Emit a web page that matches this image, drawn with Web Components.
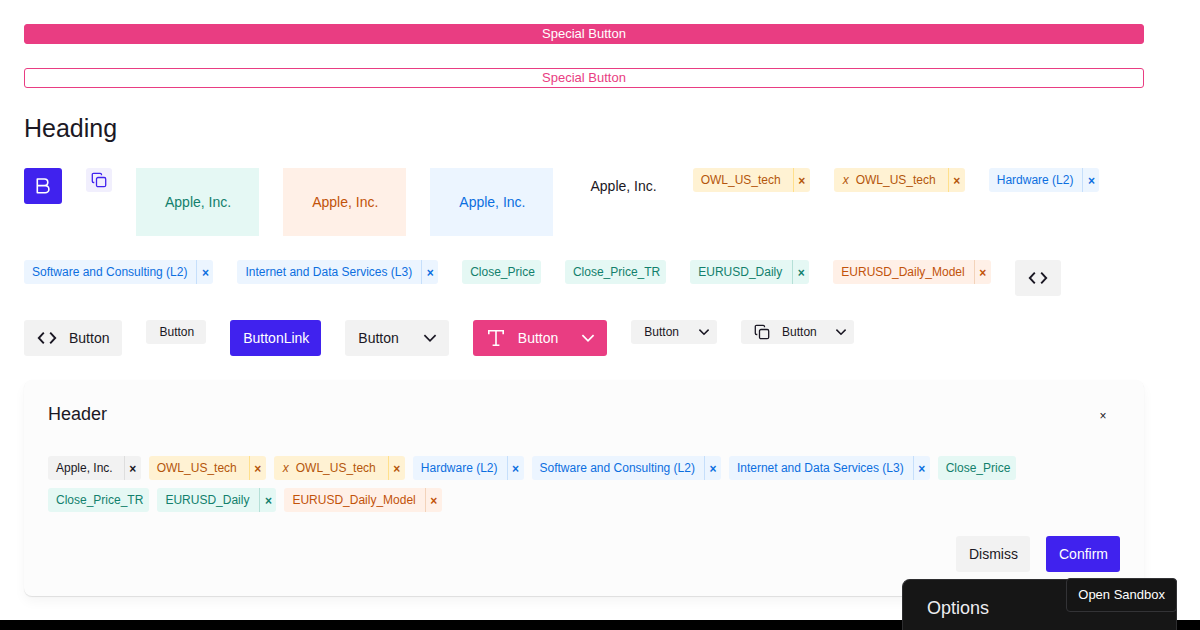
<!DOCTYPE html>
<html lang="en">
<head>
<meta charset="utf-8">
<title>Component gallery</title>
<style>
  html { background: #000; }
  body { margin: 0; font-family: "Liberation Sans", Arial, sans-serif; color: #1b1824; }
</style>
</head>
<body>
<kit-gallery></kit-gallery>

<script>
const base = `
  *, *::before, *::after { box-sizing: border-box; }
  button, a { font: inherit; color: inherit; margin: 0; text-decoration: none; cursor: pointer; }
`;

const icons = {
  bold: '<svg width="20" height="20" viewBox="0 0 20 20" fill="none" stroke="currentColor" stroke-width="1.6" stroke-linejoin="round"><path d="M4.300 3h7.200a3.300 3.300 0 0 1 0 6.600H4.300zM4.300 9.600h8a3.500 3.500 0 0 1 0 7.200h-8z"/></svg>',
  text: '<svg width="20" height="20" viewBox="0 0 20 20" fill="none" stroke="currentColor" stroke-width="1.600"><path d="M2.800 6.200V2.800h14.400v3.400M10 2.800v14.400M6.600 17.200h6.800"/></svg>',
  code: '<svg width="20" height="20" viewBox="0 0 20 20" fill="none" stroke="currentColor" stroke-width="1.9"><path d="M6.800 4.600 1.800 10l5 5.400M13.200 4.600l5 5.400-5 5.400"/></svg>',
  copy: '<svg width="16" height="16" viewBox="0 0 16 16" fill="none" stroke="currentColor" stroke-width="1.300"><rect x="5.500" y="5.500" width="9.200" height="9.200" rx="1.500"/><path d="M3.300 10.500H2.500A1.200 1.200 0 0 1 1.300 9.300V2.500A1.200 1.200 0 0 1 2.500 1.300h6.800a1.200 1.200 0 0 1 1.200 1.200v.8"/></svg>',
  chevron: '<svg width="14" height="14" viewBox="0 0 14 14" fill="none" stroke="currentColor" stroke-width="1.700"><path d="M1.400 4.200 7 9.800l5.600-5.600"/></svg>',
  chevronSmall: '<svg width="12" height="12" viewBox="0 0 12 12" fill="none" stroke="currentColor" stroke-width="1.500"><path d="M1.400 3.600 6 8.200l4.600-4.600"/></svg>'
};

function define(name, css, html) {
  customElements.define(name, class extends HTMLElement {
    constructor() {
      super();
      this.attachShadow({ mode: 'open' }).innerHTML = `<style>${base}${css}</style>` +
        (typeof html === 'function' ? html(this) : html);
    }
  });
}

define('kit-special', `
  :host { display: block; }
  button { display: block; width: 100%; height: 20px; padding: 0; border: 1px solid #e93d82; border-radius: 3px;
    background: #e93d82; color: #fff; font-size: 13px; line-height: 18px; }
  :host([outline]) button { background: #fff; color: #e93d82; }
`, '<button type="button"><slot></slot></button>');

define('kit-heading', `
  :host { display: block; }
  h1 { margin: 0; font-size: 25px; line-height: 32px; font-weight: 400; }
`, '<h1><slot></slot></h1>');

define('kit-button', `
  :host { display: block; flex: none; --bg: #f2f2f2; --fg: #1b1824; }
  :host([tone=primary]) { --bg: #4022ee; --fg: #fff; }
  :host([tone=accent]) { --bg: #e93d82; --fg: #fff; }
  :host([tone=soft]) { --bg: #f1effd; --fg: #4022ee; }
  :host([tone=plain]) { --bg: #fff; }
  .wrap { display: flex; border-radius: 3px; overflow: hidden; background: var(--bg); color: var(--fg);
    font-size: 14px; line-height: 20px; }
  button, a { display: flex; align-items: center; justify-content: center; gap: 12px; height: 36px;
    padding: 0 13px; border: 0; background: none; white-space: nowrap; }
  :host(:not([icon])) button, :host(:not([icon])) a { padding: 0 12px 0 13px; }
  svg { display: block; flex: none; }
  :host .wrap .more { padding: 0 12px; }
  :host([icon]) .wrap .more { padding: 0 12px 0 10px; }
  :host([small]) .wrap { font-size: 12px; line-height: 16px; }
  :host([small]) button { height: 24px; }
  :host([small]) .wrap .more { padding: 0 7px; }
  :host([small][icon]) .wrap .more { padding: 0 7px 0 5px; }
  :host([square]) button { padding: 0 9px; }
  :host([small][square]) button { padding: 0 5px; }
`, el => {
  const icon = icons[el.getAttribute('icon')] || '';
  const label = el.textContent.trim() ? '<span><slot></slot></span>' : '';
  const href = el.getAttribute('href');
  const main = href ? `<a href="${href}">${icon}${label}</a>`
    : `<button type="button"${label ? '' : ` aria-label="${el.getAttribute('icon')}"`}>${icon}${label}</button>`;
  const more = el.hasAttribute('menu')
    ? `<button type="button" class="more" aria-label="More">${el.hasAttribute('small') ? icons.chevronSmall : icons.chevron}</button>` : '';
  return `<div class="wrap">${main}${more}</div>`;
});

define('kit-swatch', `
  :host { display: block; flex: none; }
  div { padding: 16px; background: var(--bg); color: var(--fg); }
  button { display: block; height: 36px; padding: 0 12px 0 13px; border: 0; background: none; font-size: 14px; line-height: 20px; }
  :host([tone=green]) { --bg: #e5f8f4; --fg: #12806c; }
  :host([tone=orange]) { --bg: #fff0e7; --fg: #c2530a; }
  :host([tone=blue]) { --bg: #ecf5ff; --fg: #0c6fe0; }
`, '<div><button type="button"><slot></slot></button></div>');

define('kit-tag', `
  :host { display: flex; flex: none; height: 24px; border-radius: 3px; overflow: hidden; background: var(--bg);
    color: var(--fg); font-size: 12px; line-height: 24px; white-space: nowrap;
    --bg: #f2f2f2; --fg: #1b1824; --line: #dedede; --end: 7px; }
  :host([tone=green]) { --bg: #e5f8f4; --fg: #12806c; --line: #b5e0d7; --end: 6px; }
  :host([tone=orange]) { --bg: #fff0e7; --fg: #c2530a; --line: #f3d3ba; --end: 5px; }
  :host([tone=blue]) { --bg: #ecf5ff; --fg: #0c6fe0; --line: #c6dffb; --end: 5px; }
  :host([tone=yellow]) { --bg: #fff2d3; --fg: #b4560c; --line: #ffe08c; --end: 8px; }
  .label { padding: 0 var(--end) 0 8px; }
  i { display: inline-block; width: 14px; padding-left: 1px; }
  button { width: 17px; margin-left: 4px; padding: 0; border: 0; border-left: 1px solid var(--line);
    background: none; font-weight: 700; line-height: 26px; text-align: center; }
`, el => `<span class="label">${el.hasAttribute('variable') ? '<i>x</i>' : ''}<slot></slot></span>` +
  (el.hasAttribute('fixed') ? '' : '<button type="button" aria-label="Remove">×</button>'));

define('kit-row', `
  :host { display: flex; flex-wrap: wrap; align-items: flex-start; gap: 24px; }
  :host([tight]) { gap: 8px; }
`, '<slot></slot>');

define('kit-dialog', `
  :host { display: block; padding: 24px; border-radius: 8px; background: #fcfcfc;
    box-shadow: 0 1px 1px rgba(0,0,0,.1), 0 6px 12px rgba(0,0,0,.04); }
  header { display: flex; justify-content: space-between; height: 28px; margin-bottom: 24px; }
  h2 { margin: 0; font-size: 18px; line-height: 20px; font-weight: 400; }
  header button { width: 34px; height: 24px; padding: 0; border: 0; background: none; font-size: 12px; line-height: 24px; }
  footer { display: flex; justify-content: flex-end; gap: 16px; margin-top: 24px; }
`, `<header><h2><slot name="title"></slot></h2><button type="button" aria-label="Close">×</button></header>
  <slot></slot><footer><slot name="actions"></slot></footer>`);

define('kit-options', `
  :host { display: block; position: fixed; right: 23px; bottom: 0; width: 275px; height: 51px; padding: 18px 24px;
    border: 1px solid #2e2e30; border-bottom: 0; border-radius: 8px 4px 0 0; background: #161616; color: #ededf0; box-sizing: border-box; }
  h2 { margin: 0; font-size: 18px; line-height: 20px; font-weight: 400; }
  button { position: absolute; top: -2px; right: -1px; height: 34px; padding: 0 11px; border: 1px solid #333336;
    border-radius: 4px; background: #151515; color: #fff; font-size: 13px; line-height: 32px; }
`, '<h2>Options</h2><button type="button">Open Sandbox</button>');

define('kit-gallery', `
  :host { display: block; }
  main { display: grid; gap: 24px; padding: 24px 56px 24px 24px; background: #fff; }
`, `<main>
  <kit-special>Special Button</kit-special>
  <kit-special outline>Special Button</kit-special>
  <kit-heading>Heading</kit-heading>
  <kit-row>
    <kit-button tone="primary" icon="bold" square></kit-button>
    <kit-button tone="soft" icon="copy" small square></kit-button>
    <kit-swatch tone="green">Apple, Inc.</kit-swatch>
    <kit-swatch tone="orange">Apple, Inc.</kit-swatch>
    <kit-swatch tone="blue">Apple, Inc.</kit-swatch>
    <kit-button tone="plain">Apple, Inc.</kit-button>
    <kit-tag tone="yellow">OWL_US_tech</kit-tag>
    <kit-tag tone="yellow" variable>OWL_US_tech</kit-tag>
    <kit-tag tone="blue">Hardware (L2)</kit-tag>
    <kit-tag tone="blue">Software and Consulting (L2)</kit-tag>
    <kit-tag tone="blue">Internet and Data Services (L3)</kit-tag>
    <kit-tag tone="green" fixed>Close_Price</kit-tag>
    <kit-tag tone="green" fixed>Close_Price_TR</kit-tag>
    <kit-tag tone="green">EURUSD_Daily</kit-tag>
    <kit-tag tone="orange">EURUSD_Daily_Model</kit-tag>
    <kit-button icon="code"></kit-button>
    <kit-button icon="code">Button</kit-button>
    <kit-button small>Button</kit-button>
    <kit-button tone="primary" href="#link">ButtonLink</kit-button>
    <kit-button menu>Button</kit-button>
    <kit-button tone="accent" icon="text" menu>Button</kit-button>
    <kit-button small menu>Button</kit-button>
    <kit-button small icon="copy" menu>Button</kit-button>
  </kit-row>
  <kit-dialog>
    <span slot="title">Header</span>
    <kit-row tight>
      <kit-tag>Apple, Inc.</kit-tag>
      <kit-tag tone="yellow">OWL_US_tech</kit-tag>
      <kit-tag tone="yellow" variable>OWL_US_tech</kit-tag>
      <kit-tag tone="blue">Hardware (L2)</kit-tag>
      <kit-tag tone="blue">Software and Consulting (L2)</kit-tag>
      <kit-tag tone="blue">Internet and Data Services (L3)</kit-tag>
      <kit-tag tone="green" fixed>Close_Price</kit-tag>
      <kit-tag tone="green" fixed>Close_Price_TR</kit-tag>
      <kit-tag tone="green">EURUSD_Daily</kit-tag>
      <kit-tag tone="orange">EURUSD_Daily_Model</kit-tag>
    </kit-row>
    <kit-button slot="actions">Dismiss</kit-button>
    <kit-button slot="actions" tone="primary">Confirm</kit-button>
  </kit-dialog>
</main>
<kit-options></kit-options>`);
</script>
</body>
</html>
